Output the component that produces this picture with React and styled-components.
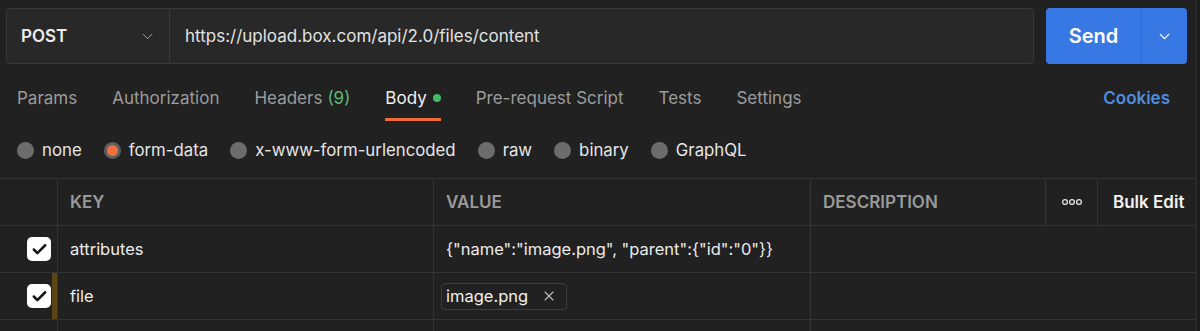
import React from 'react';
import styled, { createGlobalStyle } from 'styled-components';
import { ChevronDown, Check, X } from 'lucide-react';

const GlobalStyle = createGlobalStyle`
    body {
        margin: 0;
        background: #1c1c1c;
        font-family: Inter, "Noto Sans", sans-serif;
        -webkit-font-smoothing: antialiased;
    }
`;

const tabs = [
    { label: 'Params' },
    { label: 'Authorization' },
    { label: 'Headers', count: '(9)' },
    { label: 'Body', active: true, dot: true },
    { label: 'Pre-request Script' },
    { label: 'Tests' },
    { label: 'Settings' },
];

const bodyTypes = ['none', 'form-data', 'x-www-form-urlencoded', 'raw', 'binary', 'GraphQL'];

const rows = [
    { key: 'attributes', value: '{"name":"image.png", "parent":{"id":"0"}}' },
    { key: 'file', file: 'image.png', modified: true },
];

function Dots() {
    return (
        <svg width="20" height="8" viewBox="0 0 20 8">
            {[3, 10, 17].map((cx) => (
                <circle key={cx} cx={cx} cy="4" r="2.4" fill="none" stroke="#e6e6e6" strokeWidth="1.3" />
            ))}
        </svg>
    );
}

function App() {
    return (
        <Page>
            <GlobalStyle />
            <TopBar>
                <UrlBox>
                    <MethodSelect>
                        <span>POST</span>
                        <ChevronDown size={17} strokeWidth={1.4} color="#a8a8a8" />
                    </MethodSelect>
                    <UrlText>https://upload.box.com/api/2.0/files/content</UrlText>
                </UrlBox>
                <SendButton>
                    <SendLabel>Send</SendLabel>
                    <SendArrow>
                        <ChevronDown size={17} strokeWidth={1.8} color="#ffffff" />
                    </SendArrow>
                </SendButton>
            </TopBar>

            <TabBar>
                <TabList>
                    {tabs.map((t) => (
                        <Tab key={t.label} $active={t.active}>
                            {t.label}
                            {t.count && <Count>{t.count}</Count>}
                            {t.dot && <GreenDot />}
                        </Tab>
                    ))}
                </TabList>
                <CookiesLink>Cookies</CookiesLink>
            </TabBar>

            <RadioRow>
                {bodyTypes.map((b) => (
                    <RadioOption key={b}>
                        <RadioCircle $checked={b === 'form-data'} />
                        {b}
                    </RadioOption>
                ))}
            </RadioRow>

            <Table>
                <HeaderRow>
                    <Cell />
                    <HeadCell>KEY</HeadCell>
                    <HeadCell>VALUE</HeadCell>
                    <HeadCell>DESCRIPTION</HeadCell>
                    <IconCell><Dots /></IconCell>
                    <BulkEdit>Bulk Edit</BulkEdit>
                </HeaderRow>
                {rows.map((r) => (
                    <BodyRow key={r.key}>
                        <CheckCell>
                            <CheckBox>
                                <Check size={17} strokeWidth={3.6} color="#161616" />
                            </CheckBox>
                            <ModifiedBar $visible={r.modified} />
                        </CheckCell>
                        <TextCell>{r.key}</TextCell>
                        <TextCell>
                            {r.file ? (
                                <FileChip>
                                    {r.file}
                                    <X size={16} strokeWidth={1.6} color="#bdbdbd" />
                                </FileChip>
                            ) : r.value}
                        </TextCell>
                        <TextCell />
                    </BodyRow>
                ))}
                <BodyRow>
                    <Cell />
                    <TextCell />
                    <TextCell />
                    <TextCell />
                </BodyRow>
            </Table>
        </Page>
    );
}

const Page = styled.div`
    width: 1196px;
    height: 331px;
    background: #212121;
    border-right: 1px solid #2d2d2d;
    color: #e8e8e8;
    overflow: hidden;
`;

const TopBar = styled.div`
    display: flex;
    gap: 12px;
    padding: 8px 0 0 6px;
    width: 1181px;
`;

const UrlBox = styled.div`
    flex: 1;
    height: 56px;
    box-sizing: border-box;
    display: flex;
    background: #282828;
    border: 1px solid #383838;
    border-radius: 4px;
`;

const MethodSelect = styled.div`
    width: 163px;
    box-sizing: border-box;
    display: flex;
    align-items: center;
    justify-content: space-between;
    padding: 0 13px 0 14px;
    border-right: 1px solid #3a3a3a;
    font-size: 17px;
    font-weight: 600;
    color: #ececec;
`;

const UrlText = styled.div`
    display: flex;
    align-items: center;
    padding-left: 15px;
    font-size: 17px;
    color: #e2e2e2;
`;

const SendButton = styled.div`
    width: 141px;
    height: 56px;
    display: flex;
    background: #3778e4;
    border-radius: 4px;
    color: #ffffff;
`;

const SendLabel = styled.div`
    width: 95px;
    display: flex;
    align-items: center;
    justify-content: center;
    font-size: 20px;
    font-weight: 600;
    border-right: 1px solid #2f6bd0;
`;

const SendArrow = styled.div`
    flex: 1;
    display: flex;
    align-items: center;
    justify-content: center;
`;

const TabBar = styled.div`
    display: flex;
    align-items: flex-start;
    justify-content: space-between;
    margin-top: 14px;
    padding: 0 26px 0 17px;
`;

const TabList = styled.div`
    display: flex;
    gap: 35px;
`;

const Tab = styled.div`
    display: flex;
    align-items: center;
    height: 40px;
    border-bottom: 3px solid ${(p) => (p.$active ? '#f26b3a' : 'transparent')};
    font-size: 17px;
    color: ${(p) => (p.$active ? '#f0f0f0' : '#9c9c9c')};
    white-space: nowrap;
`;

const Count = styled.span`
    margin-left: 5px;
    color: #5cba77;
`;

const GreenDot = styled.span`
    width: 8px;
    height: 8px;
    margin-left: 6px;
    border-radius: 50%;
    background: #46b865;
`;

const CookiesLink = styled.div`
    height: 40px;
    display: flex;
    align-items: center;
    font-size: 17px;
    font-weight: 600;
    color: #4f8edf;
`;

const RadioRow = styled.div`
    display: flex;
    align-items: center;
    gap: 22px;
    height: 20px;
    margin-top: 19px;
    padding-left: 17px;
`;

const RadioOption = styled.div`
    display: flex;
    align-items: center;
    gap: 8px;
    font-size: 16.8px;
    color: #e6e6e6;
`;

const RadioCircle = styled.span`
    width: 17px;
    height: 17px;
    border-radius: 50%;
    box-sizing: border-box;
    background: ${(p) => (p.$checked ? '#f0703f' : '#6c6c6c')};
    border: ${(p) => (p.$checked ? '3px solid #5e5e5e' : 'none')};
`;

const Table = styled.div`
    margin-top: 18px;
    border-top: 1px solid #333333;
`;

const HeaderRow = styled.div`
    display: grid;
    grid-template-columns: 57px 376px 377px 235px 52px 1fr;
    height: 46px;
    border-bottom: 1px solid #333333;
`;

const BodyRow = styled.div`
    display: grid;
    grid-template-columns: 57px 376px 377px 1fr;
    height: 46px;
    border-bottom: 1px solid #333333;
`;

const Cell = styled.div`
    display: flex;
    align-items: center;
`;

const HeadCell = styled(Cell)`
    padding-left: 12px;
    border-left: 1px solid #333333;
    font-size: 17px;
    font-weight: 600;
    color: #9a9a9a;
`;

const IconCell = styled(Cell)`
    justify-content: center;
    border-left: 1px solid #333333;
`;

const BulkEdit = styled(Cell)`
    padding-left: 15px;
    border-left: 1px solid #333333;
    font-size: 17px;
    font-weight: 600;
    color: #f2f2f2;
`;

const CheckCell = styled(Cell)`
    justify-content: flex-end;
    align-items: stretch;
`;

const CheckBox = styled.span`
    align-self: center;
    width: 24px;
    height: 24px;
    margin-right: 1px;
    border-radius: 5px;
    background: #ffffff;
    display: flex;
    align-items: center;
    justify-content: center;
`;

const ModifiedBar = styled.span`
    width: 5px;
    background: ${(p) => (p.$visible ? '#5e4614' : 'transparent')};
`;

const TextCell = styled(Cell)`
    padding-left: 12px;
    border-left: 1px solid #333333;
    font-size: 16.5px;
    color: #ececec;
`;

const FileChip = styled.span`
    display: inline-flex;
    align-items: center;
    gap: 13px;
    height: 27px;
    box-sizing: border-box;
    margin-left: -5px;
    padding: 0 9px 0 4px;
    border: 1px solid #3d3d3d;
    border-radius: 4px;
    font-size: 16.5px;
    color: #f0f0f0;
`;

export default App;
